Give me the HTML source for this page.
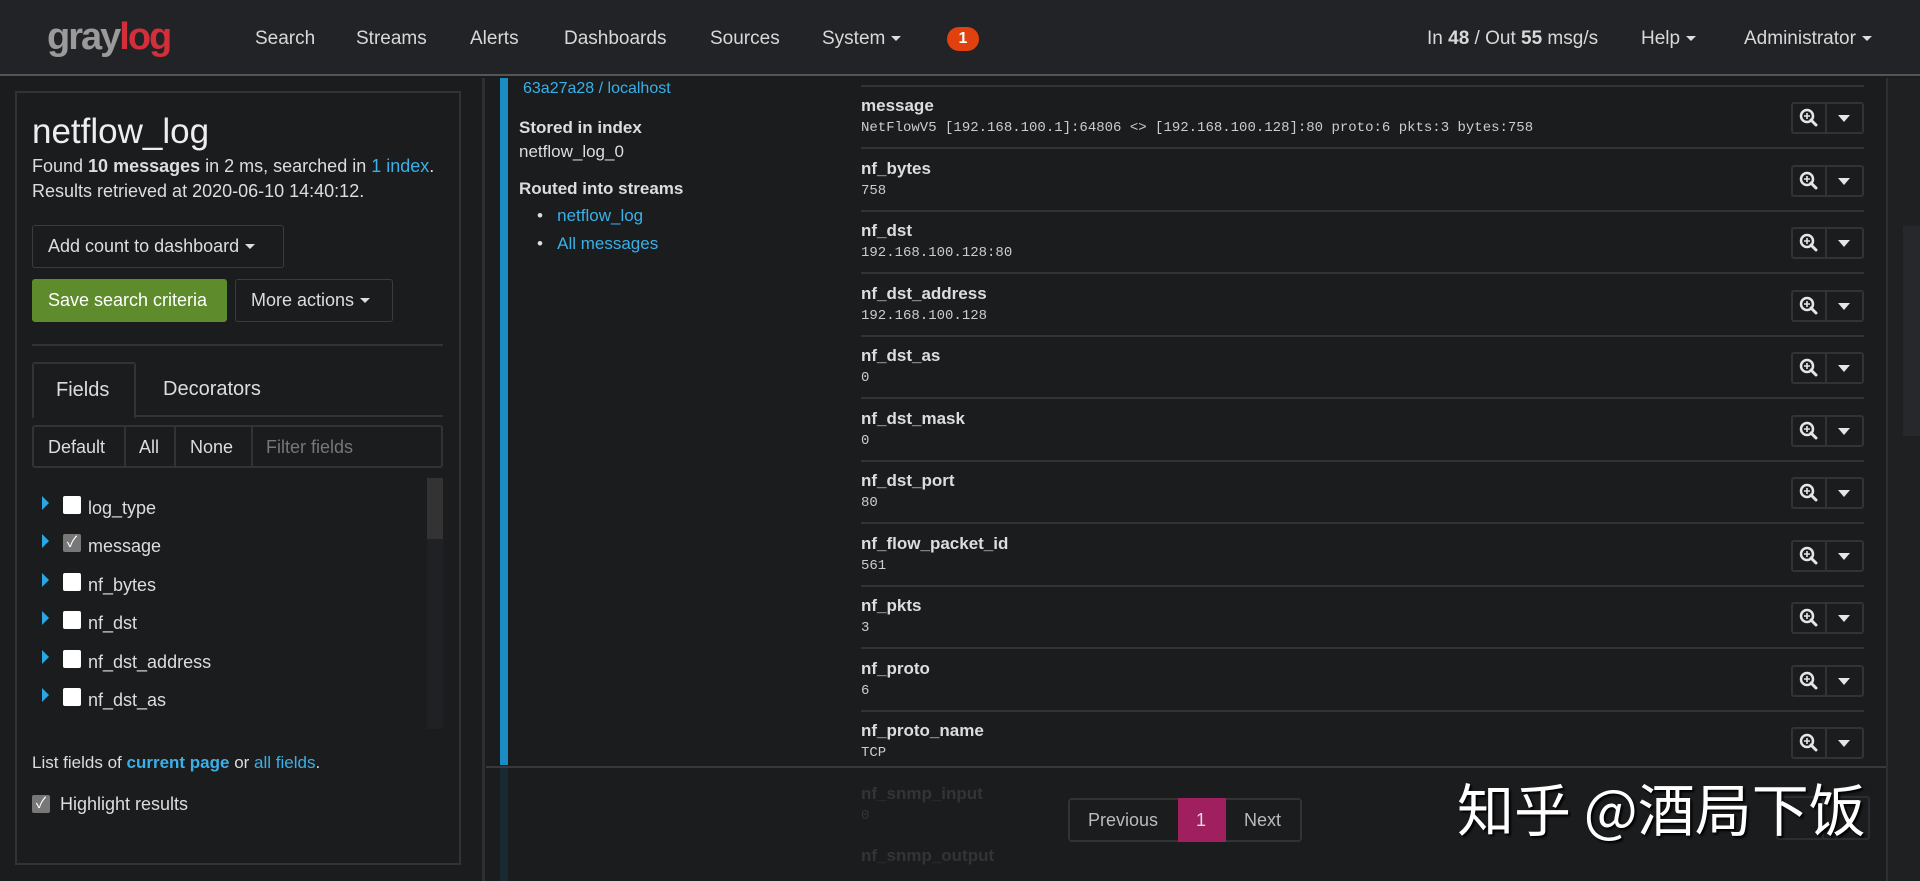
<!DOCTYPE html>
<html><head><meta charset="utf-8">
<style>
*{box-sizing:border-box;margin:0;padding:0}
body{width:1920px;height:881px;overflow:hidden;background:#1b1c1e;font-family:"Liberation Sans","Noto Sans CJK SC",sans-serif;color:#ddd;position:relative}
.a{position:absolute;white-space:nowrap}
.nav{left:0;top:0;width:1920px;height:76px;background:#222326;border-bottom:2px solid #555}
.nl{font-size:19px;color:#d8d8d8;top:28px}
.car{display:inline-block;width:0;height:0;border-left:5px solid transparent;border-right:5px solid transparent;border-top:5px solid #ddd;vertical-align:middle;margin-left:6px}
.panel{left:15px;top:91px;width:446px;height:774px;border:2px solid #333;background:#1b1c1e}
.btn{border:1px solid #3a3b3e;border-radius:3px;background:#1b1c1e;color:#ddd;font-size:18px;display:flex;align-items:center;padding-left:15px}
.link{color:#3ab0e8}
.fi{font-size:18px;color:#ddd;left:88px}
.tri{width:0;height:0;border-top:7px solid transparent;border-bottom:7px solid transparent;border-left:7px solid #2aa7e3;left:42px}
.cb{width:18px;height:18px;background:#fff;border-radius:2px;left:63px}
.fn{left:861px;font-weight:bold;font-size:17px;color:#ddd}
.fv{left:861px;font-family:"Liberation Mono","Noto Sans CJK SC",monospace;font-size:14px;color:#ccc}
.hr{left:861px;width:1003px;height:2px;background:#333}
.ab{left:1791px;width:73px;height:32px;border:2px solid #333;border-radius:3px}
</style></head><body>
<div class="a nav"></div>
<div class="a" style="left:47px;top:16px;font-size:38px;font-weight:bold;letter-spacing:-2px"><span style="color:#9a9a9a">gray</span><span style="color:#d32f3a">log</span></div>
<div class="a nl" style="left:255px">Search</div>
<div class="a nl" style="left:356px">Streams</div>
<div class="a nl" style="left:470px">Alerts</div>
<div class="a nl" style="left:564px">Dashboards</div>
<div class="a nl" style="left:710px">Sources</div>
<div class="a nl" style="left:822px">System<span class="car"></span></div>
<div class="a" style="left:947px;top:27px;width:32px;height:24px;border-radius:12px;background:#e0410f;color:#fff;font-weight:bold;font-size:16px;text-align:center;line-height:24px">1</div>
<div class="a nl" style="left:1427px">In <b>48</b> / Out <b>55</b> msg/s</div>
<div class="a nl" style="left:1641px">Help<span class="car"></span></div>
<div class="a nl" style="left:1744px">Administrator<span class="car"></span></div>

<div class="a panel"></div>
<div class="a" style="left:32px;top:112px;font-size:35px;color:#eee">netflow_log</div>
<div class="a" style="left:32px;top:156px;font-size:18px">Found <b>10 messages</b> in 2 ms, searched in <span class="link">1 index</span>.</div>
<div class="a" style="left:32px;top:181px;font-size:18px">Results retrieved at 2020-06-10 14:40:12.</div>
<div class="a btn" style="left:32px;top:225px;width:252px;height:43px">Add count to dashboard<span class="car"></span></div>
<div class="a btn" style="left:32px;top:279px;width:195px;height:43px;background:#5e8b2b;border-color:#5e8b2b;color:#fff">Save search criteria</div>
<div class="a btn" style="left:235px;top:279px;width:158px;height:43px">More actions<span class="car"></span></div>
<div class="a" style="left:32px;top:344px;width:411px;height:2px;background:#333"></div>
<div class="a" style="left:32px;top:362px;width:104px;height:56px;border:2px solid #333;border-bottom:none;border-radius:3px 3px 0 0;background:#1b1c1e;font-size:20px;padding:15px 0 0 22px">Fields</div>
<div class="a" style="left:163px;top:378px;font-size:20px">Decorators</div>
<div class="a" style="left:135px;top:415px;width:308px;height:2px;background:#333"></div>
<div class="a" style="left:32px;top:425px;width:411px;height:43px;border:2px solid #333;border-radius:3px"></div>
<div class="a" style="left:124px;top:425px;width:2px;height:43px;background:#333"></div>
<div class="a" style="left:174px;top:425px;width:2px;height:43px;background:#333"></div>
<div class="a" style="left:251px;top:425px;width:2px;height:43px;background:#333"></div>
<div class="a" style="left:48px;top:437px;font-size:18px">Default</div>
<div class="a" style="left:139px;top:437px;font-size:18px">All</div>
<div class="a" style="left:190px;top:437px;font-size:18px">None</div>
<div class="a" style="left:266px;top:437px;font-size:18px;color:#777">Filter fields</div>
<div class="a" style="left:427px;top:478px;width:16px;height:251px;background:#202124"></div>
<div class="a" style="left:427px;top:478px;width:16px;height:61px;background:#333"></div>
<div class="a tri" style="top:496px"></div><div class="a cb" style="top:496px"></div><div class="a fi" style="top:498px">log_type</div>
<div class="a tri" style="top:534px"></div><div class="a cb" style="top:534px;background:#777;color:#fff;font-size:15px;text-align:center;line-height:18px">✓</div><div class="a fi" style="top:536px">message</div>
<div class="a tri" style="top:573px"></div><div class="a cb" style="top:573px"></div><div class="a fi" style="top:575px">nf_bytes</div>
<div class="a tri" style="top:611px"></div><div class="a cb" style="top:611px"></div><div class="a fi" style="top:613px">nf_dst</div>
<div class="a tri" style="top:650px"></div><div class="a cb" style="top:650px"></div><div class="a fi" style="top:652px">nf_dst_address</div>
<div class="a tri" style="top:688px"></div><div class="a cb" style="top:688px"></div><div class="a fi" style="top:690px">nf_dst_as</div>
<div class="a" style="left:32px;top:753px;font-size:17px">List fields of <b class="link">current page</b> or <span class="link">all fields</span>.</div>
<div class="a" style="left:32px;top:795px;width:18px;height:18px;background:#777;border-radius:2px;color:#fff;font-size:15px;text-align:center;line-height:18px">✓</div>
<div class="a" style="left:60px;top:794px;font-size:18px">Highlight results</div>

<div class="a" style="left:482px;top:78px;width:3px;height:803px;background:#2e2f32"></div>
<div class="a" style="left:500px;top:78px;width:8px;height:687px;background:#1c8cc4"></div>
<div class="a" style="left:500px;top:767px;width:8px;height:114px;background:#1a2a33"></div>
<div class="a link" style="left:523px;top:80px;font-size:16px">63a27a28 / localhost</div>
<div class="a" style="left:519px;top:118px;font-size:17px;font-weight:bold">Stored in index</div>
<div class="a" style="left:519px;top:142px;font-size:17px">netflow_log_0</div>
<div class="a" style="left:519px;top:179px;font-size:17px;font-weight:bold">Routed into streams</div>
<div class="a" style="left:537px;top:206px;font-size:17px">•&nbsp;&nbsp;&nbsp;<span class="link">netflow_log</span></div>
<div class="a" style="left:537px;top:234px;font-size:17px">•&nbsp;&nbsp;&nbsp;<span class="link">All messages</span></div>

<div class="a hr" style="top:85px"></div>
<div class="a fn" style="top:96px">message</div><div class="a fv" style="top:120px">NetFlowV5 [192.168.100.1]:64806 &lt;&gt; [192.168.100.128]:80 proto:6 pkts:3 bytes:758</div>
<div class="a hr" style="top:147px"></div>
<div class="a fn" style="top:159px">nf_bytes</div><div class="a fv" style="top:183px">758</div>
<div class="a hr" style="top:210px"></div>
<div class="a fn" style="top:221px">nf_dst</div><div class="a fv" style="top:245px">192.168.100.128:80</div>
<div class="a hr" style="top:272px"></div>
<div class="a fn" style="top:284px">nf_dst_address</div><div class="a fv" style="top:308px">192.168.100.128</div>
<div class="a hr" style="top:335px"></div>
<div class="a fn" style="top:346px">nf_dst_as</div><div class="a fv" style="top:370px">0</div>
<div class="a hr" style="top:397px"></div>
<div class="a fn" style="top:409px">nf_dst_mask</div><div class="a fv" style="top:433px">0</div>
<div class="a hr" style="top:460px"></div>
<div class="a fn" style="top:471px">nf_dst_port</div><div class="a fv" style="top:495px">80</div>
<div class="a hr" style="top:522px"></div>
<div class="a fn" style="top:534px">nf_flow_packet_id</div><div class="a fv" style="top:558px">561</div>
<div class="a hr" style="top:585px"></div>
<div class="a fn" style="top:596px">nf_pkts</div><div class="a fv" style="top:620px">3</div>
<div class="a hr" style="top:647px"></div>
<div class="a fn" style="top:659px">nf_proto</div><div class="a fv" style="top:683px">6</div>
<div class="a hr" style="top:710px"></div>
<div class="a fn" style="top:721px">nf_proto_name</div><div class="a fv" style="top:745px">TCP</div>
<div class="a fn" style="top:784px;color:#333436">nf_snmp_input</div><div class="a fv" style="top:808px;color:#333436">0</div>
<div class="a fn" style="top:846px;color:#333436">nf_snmp_output</div>

<div id="btns"></div>
<div class="a" style="left:486px;top:766px;width:1400px;height:2px;background:#38393c"></div>
<div class="a" style="left:1886px;top:78px;width:2px;height:803px;background:#2e2f32"></div>
<div class="a" style="left:1888px;top:78px;width:32px;height:803px;background:#1f2022"></div>
<div class="a" style="left:1903px;top:226px;width:17px;height:210px;background:#27282b"></div>

<div class="a" style="left:1068px;top:798px;width:234px;height:44px;border:2px solid #333;border-radius:4px"></div>
<div class="a" style="left:1178px;top:798px;width:48px;height:44px;background:#a0205f"></div>
<div class="a" style="left:1088px;top:810px;font-size:18px;color:#bbb">Previous</div>
<div class="a" style="left:1196px;top:810px;font-size:18px;color:#ddd">1</div>
<div class="a" style="left:1244px;top:810px;font-size:18px;color:#bbb">Next</div>
<div class="a" style="left:1776px;top:796px;width:94px;height:44px;border:2px solid #2c2d30;border-radius:3px"></div>
<div class="a" style="left:1822px;top:796px;width:2px;height:44px;background:#2c2d30"></div>
<div class="a" style="left:1457px;top:766px;font-size:57px;color:#fff;text-shadow:2px 2px 2px #000;font-family:'Noto Sans CJK SC','WenQuanYi Zen Hei',sans-serif">知乎 @酒局下饭</div>
<script>
var tops=[102,165,227,290,352,415,477,540,602,665,727];
var h='';
tops.forEach(function(t){
h+='<div class="a ab" style="top:'+t+'px"></div><div class="a" style="left:1825px;top:'+t+'px;width:2px;height:32px;background:#333"></div>'+
'<svg class="a" style="left:1799px;top:'+(t+6)+'px" width="20" height="20" viewBox="0 0 20 20"><circle cx="8" cy="8" r="6" fill="none" stroke="#e6e6e6" stroke-width="2.5"/><path d="M12 12l5 5" stroke="#e6e6e6" stroke-width="3" stroke-linecap="round"/><path d="M8 5v6M5 8h6" stroke="#e6e6e6" stroke-width="1.6"/></svg>'+
'<div class="a" style="left:1838px;top:'+(t+13)+'px;width:0;height:0;border-left:6px solid transparent;border-right:6px solid transparent;border-top:7px solid #e6e6e6"></div>';
});
document.getElementById('btns').innerHTML=h;
</script>
</body></html>
